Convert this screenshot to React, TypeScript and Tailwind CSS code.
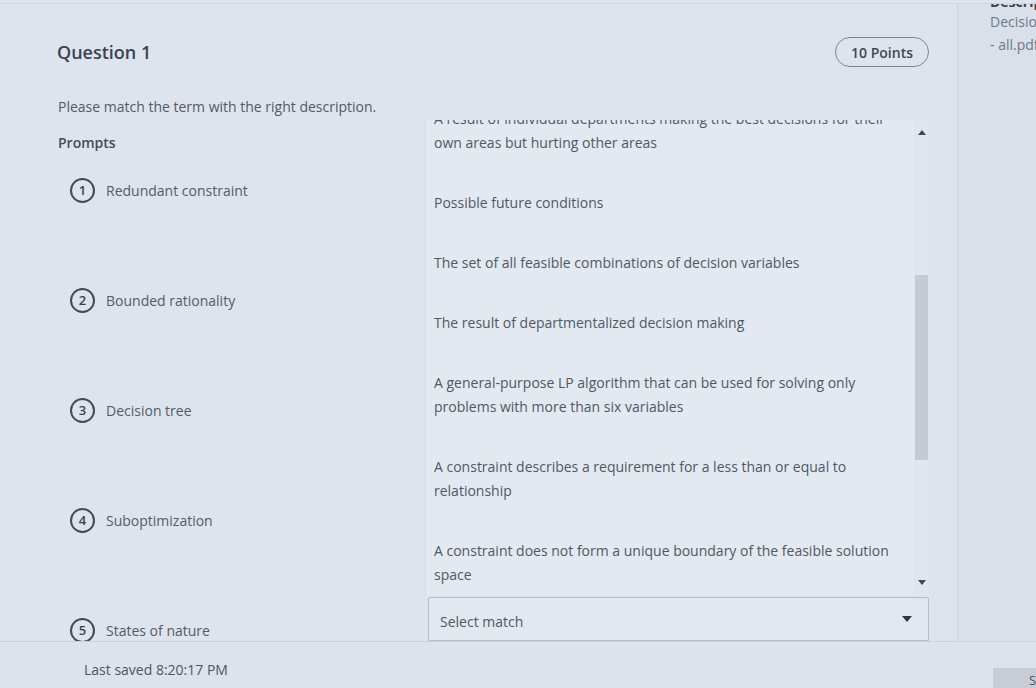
import React from 'react';

const prompts = [
  'Redundant constraint',
  'Bounded rationality',
  'Decision tree',
  'Suboptimization',
  'States of nature',
];

const answers = [
  'A result of individual departments making the best decisions for their own areas but hurting other areas',
  'Possible future conditions',
  'The set of all feasible combinations of decision variables',
  'The result of departmentalized decision making',
  'A general-purpose LP algorithm that can be used for solving only problems with more than six variables',
  'A constraint describes a requirement for a less than or equal to relationship',
  'A constraint does not form a unique boundary of the feasible solution space',
];

const Caret = ({ up = false }: { up?: boolean }) => (
  <svg width="8" height="5" viewBox="0 0 8 5" className="block">
    {up ? <path d="M0 5 L4 0 L8 5 Z" fill="#3f4752" /> : <path d="M0 0 L8 0 L4 5 Z" fill="#3f4752" />}
  </svg>
);

const App: React.FC = () => {
  return (
    <div
      className="w-[1036px] h-[688px] overflow-hidden bg-[#dde4ed] text-[#4d5663] flex flex-col"
      style={{ fontFamily: '"Open Sans", "Noto Sans", sans-serif' }}
    >
      <div className="flex h-[638px] border-t border-[#cfd7e1] mt-[3px]">
        {/* Main question area */}
        <div className="w-[957px] flex flex-col overflow-hidden">
          <div className="flex items-center justify-between pl-[57px] pr-[28px] pt-[33px]">
            <h2 className="text-[18px] font-semibold text-[#3b4350]">Question 1</h2>
            <div className="h-[30px] px-[15px] rounded-full border border-[#7d8591] flex items-center text-[14px] font-semibold text-[#3f4753]">
              10 Points
            </div>
          </div>

          <div className="flex flex-1 min-h-0">
            {/* Prompts column */}
            <div className="w-[425px] pl-[58px] flex flex-col">
              <p className="text-[14px] leading-[20px] mt-[30px] text-[#515a67] whitespace-nowrap">
                Please match the term with the right description.
              </p>
              <p className="text-[14px] leading-[20px] mt-[16px] font-semibold text-[#444c58]">Prompts</p>
              <div className="flex flex-col mt-[25px] pl-[12px]">
                {prompts.map((p, i) => (
                  <div key={p} className="h-[110px] flex items-start">
                    <div className="flex items-center gap-[11px]">
                      <span className="w-[25px] h-[25px] rounded-full border-2 border-[#444b55] flex items-center justify-center text-[13px] font-semibold text-[#3c434d]">
                        {i + 1}
                      </span>
                      <span className="text-[14px] text-[#535c69]">{p}</span>
                    </div>
                  </div>
                ))}
              </div>
            </div>

            {/* Answers column */}
            <div className="w-[504px] pt-[53px] flex flex-col">
              <div className="h-[477px] flex bg-[#e3e9f0] border-l border-[#d3dae3] overflow-hidden">
                <div className="flex-1 overflow-hidden">
                  <div className="-mt-[31px] flex flex-col pl-[8px] pr-[20px]">
                    {answers.map((a) => (
                      <div key={a} className="py-[18px] text-[14px] leading-[24px] text-[#4f5865]">
                        {a}
                      </div>
                    ))}
                  </div>
                </div>
                <div className="w-[15px] flex flex-col items-center bg-[#e0e6ee]">
                  <div className="pt-[10px] pb-[140px]">
                    <Caret up />
                  </div>
                  <div className="w-[13px] h-[185px] bg-[#c3cbd5]" />
                  <div className="flex-1" />
                  <div className="pb-[10px]">
                    <Caret />
                  </div>
                </div>
              </div>
              <div className="mt-[2px] ml-[3px] h-[44px] border border-[#b5bdc7] rounded-t-[2px] bg-[#e2e8ef] flex items-start justify-between pt-[16px] pl-[11px] pr-[16px]">
                <span className="text-[14px] leading-[20px] -mt-[2px] text-[#4f5865]">Select match</span>
                <svg width="10" height="6" viewBox="0 0 10 6" className="mt-[2px]">
                  <path d="M0 0 L10 0 L5 6 Z" fill="#2f3640" />
                </svg>
              </div>
            </div>
          </div>
        </div>

        {/* Side panel */}
        <div className="flex-1 border-l border-[#cbd3dd] bg-[#d9e0ea] overflow-hidden pl-[32px]">
          <div className="w-[200px] -mt-[10px] text-[14px] leading-[23px]">
            <div className="font-bold leading-[16px] text-[#3b4350] whitespace-nowrap">Description</div>
            <div className="text-[#6b7889] whitespace-nowrap">Decision Making</div>
            <div className="text-[#6b7889] whitespace-nowrap">- all.pdf</div>
          </div>
        </div>
      </div>

      {/* Footer */}
      <div className="flex-1 border-t border-[#c9d1db] bg-[#dce3ec] flex items-end justify-between">
        <p className="pl-[84px] pb-[8px] text-[14px] text-[#4d5663]">Last saved 8:20:17 PM</p>
        <div className="w-[43px] h-[20px] bg-[#c6cdd6] overflow-hidden pl-[36px] text-[13px] leading-[24px] text-[#4d5663]">
          Submit
        </div>
      </div>
    </div>
  );
};

export default App;
